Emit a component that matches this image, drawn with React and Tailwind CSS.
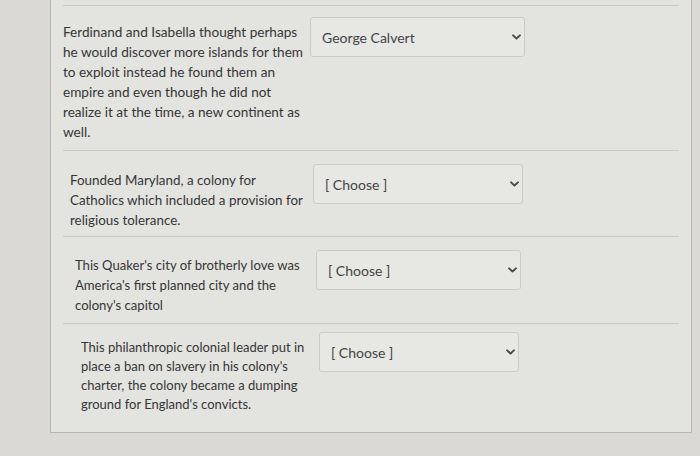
import React from 'react';

const rows = [
  {
    text: "Ferdinand and Isabella thought perhaps he would discover more islands for them to exploit instead he found them an empire and even though he did not realize it at the time, a new continent as well.",
    value: 'George Calvert',
    rowClass: 'pt-[11px] pb-[8px] pl-0',
    textClass: 'mt-[5px] w-[246px] text-[13.6px] leading-[20px]',
    selectClass: 'ml-[1px] w-[215px]',
  },
  {
    text: 'Founded Maryland, a colony for Catholics which included a provision for religious tolerance.',
    value: '[ Choose ]',
    rowClass: 'pt-[13px] pb-[6px] pl-[7px]',
    textClass: 'mt-[6px] w-[238px] text-[13.4px] leading-[20px]',
    selectClass: 'ml-[5px] w-[210px]',
  },
  {
    text: "This Quaker's city of brotherly love was America's first planned city and the colony's capitol",
    value: '[ Choose ]',
    rowClass: 'pt-[13px] pb-[8px] pl-[12px]',
    textClass: 'mt-[5px] w-[230px] text-[13.1px] leading-[20px]',
    selectClass: 'ml-[11px] w-[205px]',
  },
  {
    text: "This philanthropic colonial leader put in place a ban on slavery in his colony's charter, the colony became a dumping ground for England's convicts.",
    value: '[ Choose ]',
    rowClass: 'pt-[8px] pb-[18px] pl-[18px]',
    textClass: 'mt-[6px] w-[229px] text-[13px] leading-[19px]',
    selectClass: 'ml-[9px] w-[200px]',
  },
];

function Chevron() {
  return (
    <svg width="9" height="6" viewBox="0 0 10 6" className="text-[#4a4a4a]">
      <path d="M1.2 1.2l3.8 3.4 3.8-3.4" fill="none" stroke="currentColor" strokeWidth="2.2" strokeLinecap="round" strokeLinejoin="round" />
    </svg>
  );
}

function MatchRow({ row }) {
  return (
    <div className="mx-[12px] border-t border-[#c9c9c5]">
      <div className={`flex items-start ${row.rowClass}`}>
        <p className={`shrink-0 text-[#363636] ${row.textClass}`}>{row.text}</p>
        <div className={`flex h-[40px] shrink-0 items-center justify-between rounded-[3px] border border-[#cacac6] bg-[#e7e7e4] pl-[11px] pr-[3px] ${row.selectClass}`}>
          <span className="text-[14px] text-[#444]">{row.value}</span>
          <Chevron />
        </div>
      </div>
    </div>
  );
}

export default function App() {
  return (
    <div className="h-[456px] w-[700px] overflow-hidden bg-[#dad9d5]" style={{ fontFamily: 'Lato, "Open Sans", sans-serif' }}>
      <div className="ml-[50px] w-[642px] border-b border-l border-r border-[#b5b5b1] bg-[#e3e3e0] pt-[5px]">
        {rows.map((row, i) => (
          <MatchRow key={i} row={row} />
        ))}
      </div>
    </div>
  );
}
